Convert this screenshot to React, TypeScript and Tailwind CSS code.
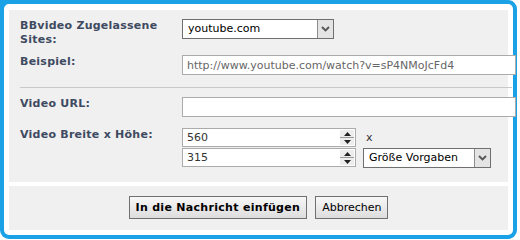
import { useState } from 'react';

function Chevron() {
  return (
    <svg width="9" height="6" viewBox="0 0 9 6">
      <path d="M1 1l3.5 3.5L8 1" fill="none" stroke="#555" strokeWidth="1.8" />
    </svg>
  );
}

function FakeSelect({ value, className }: { value: string; className: string }) {
  return (
    <div className={`flex h-[20px] items-stretch border border-[#6f6f6f] bg-white ${className}`}>
      <span className="flex-1 truncate pl-[5px] leading-[18px] text-black">{value}</span>
      <span className="flex w-[16px] items-center justify-center border-l border-[#8c8c8c] bg-[#e4e4e4]">
        <Chevron />
      </span>
    </div>
  );
}

function Spinner() {
  return (
    <div className="my-[1px] mr-[1px] flex w-[14px] flex-col bg-[#ededed]">
      <span className="flex flex-1 items-center justify-center border-b border-[#9a9a9a]">
        <svg width="7" height="4" viewBox="0 0 7 4">
          <path d="M3.5 0L7 4H0z" fill="#222" />
        </svg>
      </span>
      <span className="flex flex-1 items-center justify-center">
        <svg width="7" height="4" viewBox="0 0 7 4">
          <path d="M0 0h7L3.5 4z" fill="#222" />
        </svg>
      </span>
    </div>
  );
}

function NumberField({ value }: { value: string }) {
  return (
    <div className="flex h-[19px] w-[174px] border border-[#ababab] bg-white">
      <span className="flex-1 pl-[4px] leading-[17px] text-[#333]">{value}</span>
      <Spinner />
    </div>
  );
}

export default function App() {
  const [url, setUrl] = useState('');

  return (
    <div className="h-[240px] w-[520px] bg-white font-['DejaVu_Sans',Verdana,sans-serif] text-[11px] leading-[14px]">
      <div className="h-[239px] w-[517px] rounded-tr-[9px] rounded-b-[9px] bg-[#1ba1e6] p-[4px]">
        <div className="flex h-full flex-col gap-[4px] rounded-[5px] bg-white px-[5px] pt-[6px] pb-[5px]">
          <div className="h-[172px] bg-[#f0f0f0] pt-[9px] pl-[11px]">
            <div className="grid grid-cols-[162px_1fr]">
              <div className="font-bold tracking-[0.25px] text-[#3e4a61]">
                BBvideo Zugelassene
                <br />
                Sites:
              </div>
              <FakeSelect value="youtube.com" className="w-[152px]" />
            </div>

            <div className="mt-[8px] grid grid-cols-[162px_1fr]">
              <div className="font-bold tracking-[0.25px] text-[#3e4a61]">Beispiel:</div>
              <input
                readOnly
                value="http://www.youtube.com/watch?v=sP4NMoJcFd4"
                className="h-[20px] w-[334px] border border-[#ababab] bg-white pl-[4px] text-[11px] text-[#666] outline-none"
              />
            </div>

            <div className="mt-[12px] h-[1px] w-[492px] bg-[#c9c9c9]" />

            <div className="mt-[9px] grid grid-cols-[162px_1fr]">
              <div className="font-bold tracking-[0.25px] text-[#3e4a61]">Video URL:</div>
              <input
                value={url}
                onChange={(e) => setUrl(e.target.value)}
                className="h-[20px] w-[334px] border border-[#ababab] bg-white pl-[4px] text-[11px] text-black outline-none"
              />
            </div>

            <div className="mt-[11px] grid grid-cols-[162px_1fr]">
              <div className="font-bold tracking-[0.25px] text-[#3e4a61]">Video Breite x Höhe:</div>
              <div className="flex flex-col gap-[1px]">
                <div className="flex items-start">
                  <NumberField value="560" />
                  <span className="ml-[10px] leading-[19px] text-[#333]">x</span>
                </div>
                <div className="flex items-start">
                  <NumberField value="315" />
                  <FakeSelect value="Größe Vorgaben" className="ml-[7px] w-[128px]" />
                </div>
              </div>
            </div>
          </div>

          <div className="flex flex-1 items-start justify-center gap-[8px] bg-[#f0f0f0] pt-[10px]">
            <button className="h-[23px] border border-[#707070] bg-linear-to-b from-[#f8f8f8] to-[#dddddd] px-[6px] font-bold tracking-[0.3px] text-black">
              In die Nachricht einfügen
            </button>
            <button className="h-[23px] border border-[#707070] bg-linear-to-b from-[#f8f8f8] to-[#dddddd] px-[6px] text-black">
              Abbrechen
            </button>
          </div>
        </div>
      </div>
    </div>
  );
}
